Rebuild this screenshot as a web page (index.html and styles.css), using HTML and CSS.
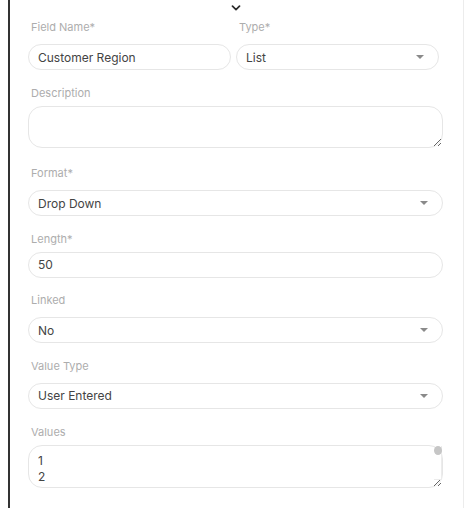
FILE: index.html
```html
<!DOCTYPE html>
<html lang="en">
<head>
<meta charset="utf-8">
<title>Field editor</title>
<link rel="stylesheet" href="styles.css">
</head>
<body>
<div class="panel">
  <div class="collapse">
    <svg class="chevron" width="10" height="6" viewBox="0 0 10 6" aria-hidden="true"><path d="M1.5 1.2 L5 4.6 L8.5 1.2" fill="none" stroke="#2b2b2b" stroke-width="1.7" stroke-linecap="round" stroke-linejoin="round"/></svg>
  </div>
  <div class="form">
    <div class="row">
      <div class="field">
        <label class="label">Field Name*</label>
        <input class="input input--offset" type="text" value="Customer Region">
      </div>
      <div class="field">
        <label class="label">Type*</label>
        <div class="select-wrap"><select class="select"><option>List</option></select></div>
      </div>
    </div>
    <div class="field">
      <label class="label">Description</label>
      <textarea class="textarea"></textarea>
    </div>
    <div class="field">
      <label class="label">Format*</label>
      <div class="select-wrap"><select class="select"><option>Drop Down</option></select></div>
    </div>
    <div class="field">
      <label class="label">Length*</label>
      <input class="input" type="text" value="50">
    </div>
    <div class="field">
      <label class="label">Linked</label>
      <div class="select-wrap"><select class="select"><option>No</option></select></div>
    </div>
    <div class="field">
      <label class="label">Value Type</label>
      <div class="select-wrap"><select class="select"><option>User Entered</option></select></div>
    </div>
    <div class="field">
      <label class="label">Values</label>
      <div class="values-wrap">
        <textarea class="textarea textarea--values">1
2
3
4
5
6
7
8
9
10</textarea>
        <div class="scrollbar" aria-hidden="true"><div class="scrollbar-thumb"></div></div>
        <div class="scroll-corner" aria-hidden="true"></div>
      </div>
    </div>
  </div>
</div>
</body>
</html>
```

FILE: styles.css
```css
html, body {
  margin: 0;
  padding: 0;
  background: #ffffff;
}

body {
  font-family: Inter, "Open Sans", "Liberation Sans", sans-serif;
}

.panel {
  margin-left: 8px;
  width: 456px;
  box-sizing: border-box;
  border-left: 2px solid #333333;
  border-right: 1px solid #ececec;
  padding: 0 20px 18px 18px;
}

.collapse {
  height: 19px;
  display: flex;
  justify-content: center;
  align-items: flex-start;
}

.chevron {
  display: block;
  margin-top: 5px;
}

.form {
  display: flex;
  flex-direction: column;
  gap: 14.6px;
}

.row {
  display: grid;
  grid-template-columns: 1fr 1fr;
  column-gap: 5px;
  margin-right: 4px;
  align-items: start;
}

.field {
  display: flex;
  flex-direction: column;
  min-width: 0;
}

.label {
  display: block;
  font-size: 11px;
  line-height: 16px;
  color: #adadad;
  padding-left: 3px;
  margin-bottom: 5px;
}

.input,
.select,
.textarea {
  font-family: inherit;
  font-size: 12px;
  color: #444444;
  background: #ffffff;
  border: 1px solid #e6e6e6;
  box-sizing: border-box;
  outline: none;
  margin: 0;
}

.input,
.select {
  display: block;
  width: 100%;
  height: 26px;
  border-radius: 13px;
  padding: 0 9px;
}

.input--offset {
  margin-top: 4px;
}

.select {
  appearance: none;
  -webkit-appearance: none;
}

.select-wrap {
  position: relative;
  margin-top: 4px;
}

.select-wrap::after {
  content: "";
  position: absolute;
  right: 15px;
  top: 11px;
  width: 0;
  height: 0;
  border-left: 4px solid transparent;
  border-right: 4px solid transparent;
  border-top: 4px solid #8a8a8a;
  pointer-events: none;
}

.textarea {
  display: block;
  width: 100%;
  height: 42px;
  border-radius: 14px;
  padding: 8px 9px;
  line-height: 16px;
  resize: both;
  margin-bottom: 3px;
  overflow: hidden;
}

.values-wrap {
  position: relative;
}

.textarea--values {
  height: 43px;
  padding-top: 7px;
}

.scrollbar {
  position: absolute;
  top: 1px;
  right: 1px;
  width: 8px;
  height: 33px;
  box-sizing: border-box;
  border-right: 1px solid #ececec;
}

.scrollbar-thumb {
  width: 8px;
  height: 9px;
  border-radius: 50%;
  background: #c6c6c6;
}

.scroll-corner {
  position: absolute;
  right: 2px;
  top: 34px;
  width: 7px;
  height: 1px;
  background: #ececec;
}
```
